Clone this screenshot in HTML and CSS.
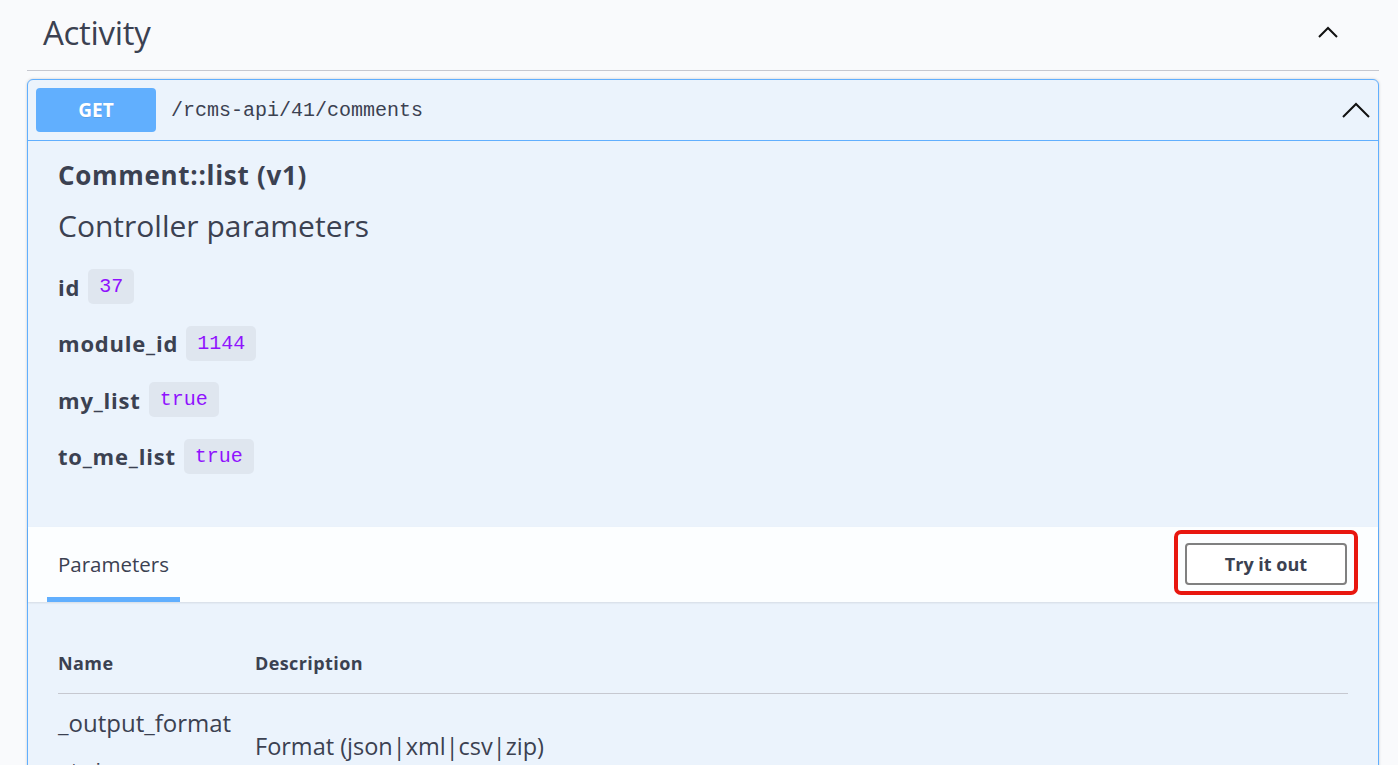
FILE: index.html
```html
<!DOCTYPE html>
<html lang="en">
<head>
  <meta charset="UTF-8" />
  <title>Activity - API</title>
  <meta name="viewport" content="width=device-width, initial-scale=1.0"/>
  <link rel="stylesheet" href="styles.css">
</head>
<body>
  <div class="tag-section">
    <div class="tag-header">
      <h3>Activity</h3>
      <svg class="tag-arrow" width="20" height="12" viewBox="0 0 20 12"><path d="M1 11 L10 2 L19 11" fill="none" stroke="#111" stroke-width="2"/></svg>
    </div>

    <div class="opblock">
      <div class="opblock-summary">
        <span class="method">GET</span>
        <span class="path">/rcms-api/41/comments</span>
        <svg class="op-arrow" width="28" height="16" viewBox="0 0 28 16"><path d="M1 15 L14 2 L27 15" fill="none" stroke="#111" stroke-width="2"/></svg>
      </div>

      <div class="opblock-body">
        <div class="description">
          <h4>Comment::list (v1)</h4>
          <h2>Controller parameters</h2>
          <div class="ctrl-param"><strong>id</strong><code>37</code></div>
          <div class="ctrl-param"><strong>module_id</strong><code>1144</code></div>
          <div class="ctrl-param"><strong>my_list</strong><code>true</code></div>
          <div class="ctrl-param"><strong>to_me_list</strong><code>true</code></div>
        </div>

        <div class="section-header">
          <div class="tab-item">Parameters</div>
          <div class="try-wrap">
            <button class="try-btn">Try it out</button>
          </div>
        </div>

        <div class="parameters">
          <table>
            <thead>
              <tr><th class="col-name">Name</th><th>Description</th></tr>
            </thead>
            <tbody>
              <tr>
                <td class="col-name">
                  <div class="param-name">_output_format</div>
                  <div class="param-type">string</div>
                </td>
                <td class="param-desc">Format (json|xml|csv|zip)</td>
              </tr>
            </tbody>
          </table>
        </div>
      </div>
    </div>
  </div>
</body>
</html>
```

FILE: styles.css
```css
* {
  margin: 0;
  padding: 0;
  box-sizing: border-box;
}

body {
  font-family: 'Open Sans', 'Noto Sans', sans-serif;
  background: #f9fafc;
  color: #3b4151;
  overflow: hidden;
}

.tag-section {
  padding: 0 19px 0 27px;
}

.tag-header {
  display: flex;
  align-items: center;
  justify-content: space-between;
  height: 71px;
  padding: 0 41px 6px 16px;
  border-bottom: 1px solid #c6c8d0;
}

.tag-header h3 {
  font-size: 33px;
  font-weight: 400;
  letter-spacing: -0.3px;
}

.opblock {
  margin-top: 8px;
  border: 1px solid #61affe;
  border-radius: 6px;
  background: #ebf3fc;
  box-shadow: 0 0 3px rgba(0,0,0,0.19);
}

.opblock-summary {
  display: flex;
  align-items: center;
  height: 61px;
  padding: 0 8px 0 8px;
  border-bottom: 1px solid #61affe;
}

.method {
  width: 120px;
  height: 44px;
  line-height: 44px;
  text-align: center;
  background: #61affe;
  color: #fff;
  font-weight: 700;
  font-size: 19px;
  border-radius: 4px;
  text-shadow: 0 1px 0 rgba(0,0,0,0.1);
}

.path {
  flex: 1;
  margin-left: 15px;
  font-family: 'Liberation Mono', 'DejaVu Sans Mono', monospace;
  font-size: 20px;
  color: #3b4151;
}

.description {
  padding: 16px 30px 32px;
}

.description h4 {
  font-size: 26px;
  font-weight: 700;
  line-height: 36px;
  letter-spacing: 0.7px;
}

.description h2 {
  font-size: 30px;
  font-weight: 400;
  line-height: 40px;
  margin: 13px 0 23px;
}

.ctrl-param {
  display: flex;
  align-items: center;
  gap: 8px;
  height: 35px;
  margin-bottom: 21.5px;
}

.ctrl-param strong {
  font-size: 22px;
  font-weight: 700;
  letter-spacing: 0.8px;
}

.ctrl-param code {
  background: #dfe6ef;
  border-radius: 5px;
  padding: 0 11px;
  height: 35px;
  line-height: 35px;
  font-family: 'Liberation Mono', 'DejaVu Sans Mono', monospace;
  font-size: 20px;
  color: #9012fe;
}

.section-header {
  display: flex;
  align-items: center;
  justify-content: space-between;
  height: 75px;
  padding: 0 20px 0 19px;
  background: rgba(255,255,255,0.85);
  box-shadow: 0 1px 2px rgba(0,0,0,0.1);
}

.tab-item {
  align-self: flex-end;
  padding: 0 11px;
  height: 100%;
  display: flex;
  align-items: center;
  font-size: 20.5px;
  border-bottom: 5px solid #61affe;
  padding-top: 3px;
}

.try-wrap {
  align-self: flex-start;
  margin-top: 3px;
  border: 4px solid #e8170f;
  border-radius: 7px;
  padding: 9px 7px 6px;
}

.try-btn {
  display: block;
  width: 162px;
  height: 42px;
  border: 2px solid #808080;
  border-radius: 4px;
  background: #fff;
  font-family: 'Open Sans', 'Noto Sans', sans-serif;
  font-size: 18px;
  font-weight: 700;
  color: #3b4151;
  cursor: pointer;
}

.parameters {
  padding: 32px 30px 60px;
}

.parameters table {
  width: 100%;
  border-collapse: collapse;
}

.parameters th {
  text-align: left;
  font-size: 18px;
  font-weight: 700;
  letter-spacing: 0.4px;
  height: 59px;
  border-bottom: 1px solid #c6c8d0;
}

.col-name {
  width: 197px;
}

.parameters td {
  vertical-align: top;
  padding-top: 14px;
}

.param-name {
  font-size: 24px;
  line-height: 30px;
}

.param-type {
  font-family: 'Liberation Mono', monospace;
  font-size: 19px;
  margin-top: 22px;
}

.param-desc {
  font-size: 23.5px;
  padding-top: 36px !important;
}
```
